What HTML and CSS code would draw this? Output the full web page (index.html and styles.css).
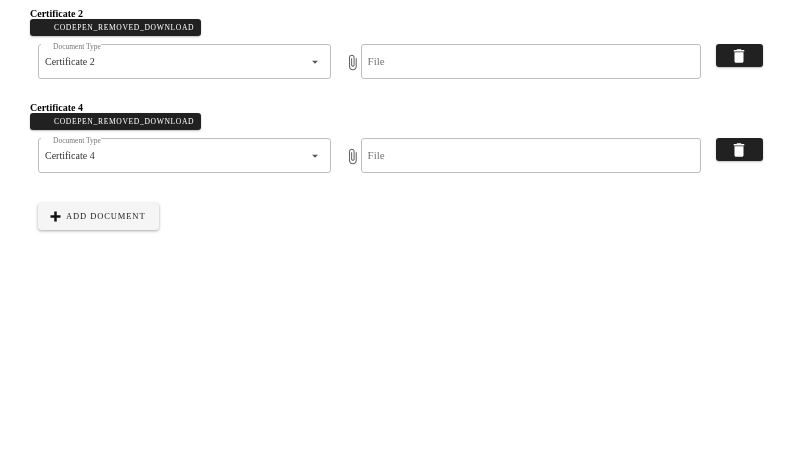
FILE: index.html
```html
<!DOCTYPE html>
<html lang="en">
<head>
<meta charset="utf-8">
<title>Documents</title>
<link rel="stylesheet" href="styles.css">
</head>
<body>
<main class="page">
  <section class="doc">
    <h2 class="doc-title">Certificate 2</h2>
    <button class="download" type="button">CODEPEN_REMOVED_DOWNLOAD</button>
    <div class="row">
      <div class="select">
        <span class="label">Document Type</span>
        <span class="value">Certificate 2</span>
        <svg class="caret" viewBox="0 0 24 24"><path d="M7 10l5 5 5-5z"/></svg>
      </div>
      <svg class="clip" viewBox="0 0 24 24"><path d="M16.5 6v11.5c0 2.21-1.79 4-4 4s-4-1.79-4-4V5c0-1.38 1.12-2.5 2.5-2.5s2.5 1.12 2.5 2.5v10.5c0 .55-.45 1-1 1s-1-.45-1-1V6H10v9.5c0 1.38 1.12 2.5 2.5 2.5s2.5-1.12 2.5-2.5V5c0-2.21-1.79-4-4-4S7 2.79 7 5v12.5c0 3.04 2.46 5.5 5.5 5.5s5.5-2.46 5.5-5.5V6h-1.5z"/></svg>
      <div class="file">File</div>
      <button class="trash" type="button" aria-label="Delete">
        <svg viewBox="0 0 24 24"><path d="M6 19c0 1.1.9 2 2 2h8c1.1 0 2-.9 2-2V7H6v12zM19 4h-3.5l-1-1h-5l-1 1H5v2h14V4z"/></svg>
      </button>
    </div>
  </section>
  <section class="doc">
    <h2 class="doc-title">Certificate 4</h2>
    <button class="download" type="button">CODEPEN_REMOVED_DOWNLOAD</button>
    <div class="row">
      <div class="select">
        <span class="label">Document Type</span>
        <span class="value">Certificate 4</span>
        <svg class="caret" viewBox="0 0 24 24"><path d="M7 10l5 5 5-5z"/></svg>
      </div>
      <svg class="clip" viewBox="0 0 24 24"><path d="M16.5 6v11.5c0 2.21-1.79 4-4 4s-4-1.79-4-4V5c0-1.38 1.12-2.5 2.5-2.5s2.5 1.12 2.5 2.5v10.5c0 .55-.45 1-1 1s-1-.45-1-1V6H10v9.5c0 1.38 1.12 2.5 2.5 2.5s2.5-1.12 2.5-2.5V5c0-2.21-1.79-4-4-4S7 2.79 7 5v12.5c0 3.04 2.46 5.5 5.5 5.5s5.5-2.46 5.5-5.5V6h-1.5z"/></svg>
      <div class="file">File</div>
      <button class="trash" type="button" aria-label="Delete">
        <svg viewBox="0 0 24 24"><path d="M6 19c0 1.1.9 2 2 2h8c1.1 0 2-.9 2-2V7H6v12zM19 4h-3.5l-1-1h-5l-1 1H5v2h14V4z"/></svg>
      </button>
    </div>
  </section>
  <button class="add" type="button">
    <svg viewBox="0 0 24 24"><path d="M20 14h-6v6h-4v-6H4v-4h6V4h4v6h6z"/></svg>
    <span>ADD DOCUMENT</span>
  </button>
</main>
</body>
</html>
```
FILE: styles.css
```css
* { box-sizing: border-box; }
html, body { margin: 0; background: #fff; }
body { font-family: "Liberation Serif", "Times New Roman", serif; color: #000; }
.page { padding: 7px 37px 20px 30px; width: 800px; will-change: transform; }
.doc { height: 94px; }
.doc-title { height: 12px; margin: 0; padding-top: 1px; font-size: 10px; line-height: 11px; font-weight: 700; }
.download {
  display: block; width: 171px; height: 17px; margin: 0; padding: 0 0 0 24px;
  border: 0; border-radius: 3px; background: #212121; color: #fff;
  font: 7.6px/17px "Liberation Serif", serif; letter-spacing: .64px; text-align: left; white-space: nowrap;
  box-shadow: 0 1px 2px rgba(0,0,0,.25);
}
.row { display: flex; align-items: flex-start; margin: 8px 0 0 8px; }
.select, .file { height: 35px; border: 1px solid #bdbdbd; border-radius: 3px; background: #fff; }
.select { position: relative; width: 293px; display: flex; align-items: center; padding: 0 6px; font-size: 10px; color: #333; }
.label { position: absolute; left: 2px; top: -3px; padding: 0 0 0 12px; background: #fff; font-size: 7.5px; line-height: 9px; color: #777; }
.value { flex: 1; margin-top: -1px; }
.caret { width: 14px; height: 14px; margin-right: 2px; fill: #555; flex: none; }
.clip { width: 17px; height: 17px; margin: 10px 0 0 13px; fill: #666; flex: none; }
.file { width: 341px; padding: 0 6px; font-size: 11px; line-height: 33px; color: #777; }
.trash { width: 47px; height: 23px; margin: 0 0 0 15px; padding: 0 1px 0 0; border: 0; border-radius: 3px; background: #212121; display: flex; align-items: center; justify-content: center; box-shadow: 0 1px 2px rgba(0,0,0,.25); }
.trash svg { width: 18px; height: 18px; fill: #fff; }
.add {
  display: flex; align-items: center; gap: 3px; width: 121px; height: 27px; margin: 8px 0 0 8px; padding: 0 0 0 10px;
  border: 0; border-radius: 3px; background: #f5f5f5; color: #222;
  font: 8.5px/27px "Liberation Serif", serif; letter-spacing: .9px; white-space: nowrap;
  box-shadow: 0 1px 3px rgba(0,0,0,.35);
}
.add svg { width: 15px; height: 15px; fill: #111; flex: none; }
```
